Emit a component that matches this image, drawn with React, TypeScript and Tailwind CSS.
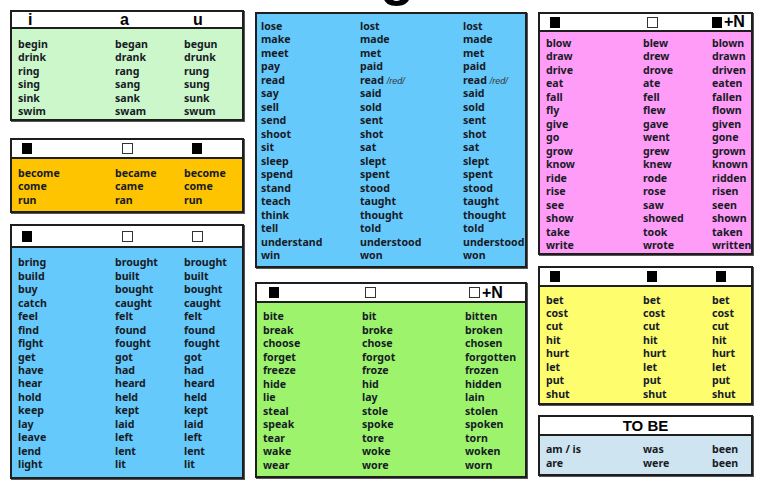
import React from "react";

type Mark = "fill" | "hollow" | "fillN" | "hollowN";

interface VerbBoxProps {
  rows: string[][];
  marks?: Mark[];
  title?: string;
  letters?: string[];
  bg: string;
  cols: string;
  body: string;
  header?: string;
  shifts?: string[];
}

const font = { fontFamily: '"Noto Sans", "DejaVu Sans", sans-serif' };
const headFont = { fontFamily: '"Liberation Sans", Arial, sans-serif' };

function Marker({ kind }: { kind: Mark }) {
  const square =
    kind === "fill" || kind === "fillN" ? (
      <span className="inline-block h-[11px] w-[10px] bg-black" />
    ) : (
      <span className="inline-block h-[11px] w-[11px] border border-[#333] bg-white" />
    );
  if (kind === "fillN" || kind === "hollowN") {
    return (
      <span className="flex items-center gap-[2px]">
        {square}
        <span className="text-[16px] leading-none font-bold text-black" style={headFont}>
          +N
        </span>
      </span>
    );
  }
  return square;
}

function Cell({ text }: { text: string }) {
  if (text.endsWith("/red/")) {
    return (
      <span>
        read{" "}
        <span className="text-[9px] leading-[0] font-normal italic text-[#333]" style={headFont}>
          /red/
        </span>
      </span>
    );
  }
  return <span>{text}</span>;
}

function VerbBox({ rows, marks, title, letters, bg, cols, body, header, shifts }: VerbBoxProps) {
  return (
    <div className="border-2 border-[#1e1e1e] shadow-[1px_1px_0_#555]">
      {marks && (
        <div className={`grid items-center border-b-2 border-[#1e1e1e] bg-white ${cols} ${header}`}>
          {marks.map((m, i) => (
            <div key={i} className={`flex ${shifts?.[i] ?? ""}`}>
              <Marker kind={m} />
            </div>
          ))}
        </div>
      )}
      {letters && (
        <div className={`grid items-center border-b-2 border-[#1e1e1e] bg-white ${cols} ${header}`}>
          {letters.map((l, i) => (
            <div key={i} className={`text-[16px] leading-[16px] font-bold text-black ${shifts?.[i] ?? ""}`} style={headFont}>
              {l}
            </div>
          ))}
        </div>
      )}
      {title && (
        <div
          className="flex h-[19px] items-center justify-center border-b-2 border-[#1e1e1e] bg-white text-[15px] font-bold text-black"
          style={headFont}
        >
          {title}
        </div>
      )}
      <div
        className={`grid auto-rows-[13.47px] ${cols} ${bg} ${body} text-[10.6px] leading-[13.47px] font-bold text-[#171b26]`}
        style={font}
      >
        {rows.map((r, i) => (
          <React.Fragment key={i}>
            {r.map((c, j) => (
              <Cell key={j} text={c} />
            ))}
          </React.Fragment>
        ))}
      </div>
    </div>
  );
}

const split = (s: string) => s.split(",").map((r) => r.trim().split(" "));

const iau = split("begin began begun, drink drank drunk, ring rang rung, sing sang sung, sink sank sunk, swim swam swum");
const become = split("become became become, come came come, run ran run");
const bring = split(
  "bring brought brought, build built built, buy bought bought, catch caught caught, feel felt felt, find found found, fight fought fought, get got got, have had had, hear heard heard, hold held held, keep kept kept, lay laid laid, leave left left, lend lent lent, light lit lit"
);
const lose = split(
  "lose lost lost, make made made, meet met met, pay paid paid, read read_/red/ read_/red/, say said said, sell sold sold, send sent sent, shoot shot shot, sit sat sat, sleep slept slept, spend spent spent, stand stood stood, teach taught taught, think thought thought, tell told told, understand understood understood, win won won"
).map((r) => r.map((c) => c.replace("_", " ")));
const bite = split(
  "bite bit bitten, break broke broken, choose chose chosen, forget forgot forgotten, freeze froze frozen, hide hid hidden, lie lay lain, steal stole stolen, speak spoke spoken, tear tore torn, wake woke woken, wear wore worn"
);
const blow = split(
  "blow blew blown, draw drew drawn, drive drove driven, eat ate eaten, fall fell fallen, fly flew flown, give gave given, go went gone, grow grew grown, know knew known, ride rode ridden, rise rose risen, see saw seen, show showed shown, take took taken, write wrote written"
);
const bet = split("bet bet bet, cost cost cost, cut cut cut, hit hit hit, hurt hurt hurt, let let let, put put put, shut shut shut");
const toBe = [
  ["am / is", "was", "been"],
  ["are", "were", "been"],
];

const side = "grid-cols-[97px_69px_1fr] pl-[6px]";
const mid = "grid-cols-[99px_103px_1fr] pl-[4px]";

export default function App() {
  return (
    <div className="relative h-[497px] w-[760px] overflow-hidden bg-white">
      <div className="absolute top-0 left-[380px] h-[7px] w-[36px] overflow-hidden">
        <span className="absolute top-[-53px] left-0 text-[56px] leading-none font-bold text-black" style={headFont}>
          g
        </span>
      </div>

      <div className="flex gap-[11px] pt-[10px] pl-[10px]">
        <div className="flex w-[234px] flex-col">
          <VerbBox
            letters={["i", "a", "u"]}
            shifts={["pl-[10px]", "pl-[5px]", "pl-[9px]"]}
            header="h-[17px]"
            rows={iau}
            bg="bg-[#ccf7cb]"
            cols={side}
            body="pt-[9px] pb-[0px]"
          />
          <div className="h-[17px]" />
          <VerbBox
            marks={["fill", "hollow", "fill"]}
            shifts={["pl-[4px]", "pl-[7px]", "pl-[8px]"]}
            header="h-[19px]"
            rows={become}
            bg="bg-[#ffc400]"
            cols={side}
            body="pt-[8px] pb-[4px]"
          />
          <div className="h-[11px]" />
          <VerbBox
            marks={["fill", "hollow", "hollow"]}
            shifts={["pl-[4px]", "pl-[7px]", "pl-[8px]"]}
            header="h-[22px]"
            rows={bring}
            bg="bg-[#66c9fb]"
            cols={side}
            body="pt-[8px] pb-[5px]"
          />
        </div>

        <div className="flex w-[272px] flex-col pt-[2px]">
          <VerbBox rows={lose} bg="bg-[#66c9fb]" cols={mid} body="pt-[6px] pb-[4px]" />
          <div className="h-[14px]" />
          <VerbBox
            marks={["fill", "hollow", "hollowN"]}
            shifts={["pl-[6px]", "pl-[3px]", "pl-[4px]"]}
            header="h-[19px]"
            rows={bite}
            bg="bg-[#9df36c]"
            cols={mid + " pl-[6px]"}
            body="pt-[7px] pb-[4px]"
          />
        </div>

        <div className="flex w-[215px] flex-col pt-[2px]">
          <VerbBox
            marks={["fill", "hollow", "fillN"]}
            shifts={["pl-[4px]", "pl-[4px]", "pl-[0px]"]}
            header="h-[18px]"
            rows={blow}
            bg="bg-[#ff9cf8]"
            cols={side}
            body="pt-[5px] pb-[0px]"
          />
          <div className="h-[11px]" />
          <VerbBox
            marks={["fill", "fill", "fill"]}
            shifts={["pl-[4px]", "pl-[4px]", "pl-[4px]"]}
            header="h-[19px]"
            rows={bet}
            bg="bg-[#fdfd6e]"
            cols={side}
            body="pt-[7px] pb-[2px]"
          />
          <div className="h-[10px]" />
          <VerbBox title="TO BE" rows={toBe} bg="bg-[#cfe4f1]" cols={side} body="pt-[7px] pb-[4px]" />
        </div>
      </div>
    </div>
  );
}
